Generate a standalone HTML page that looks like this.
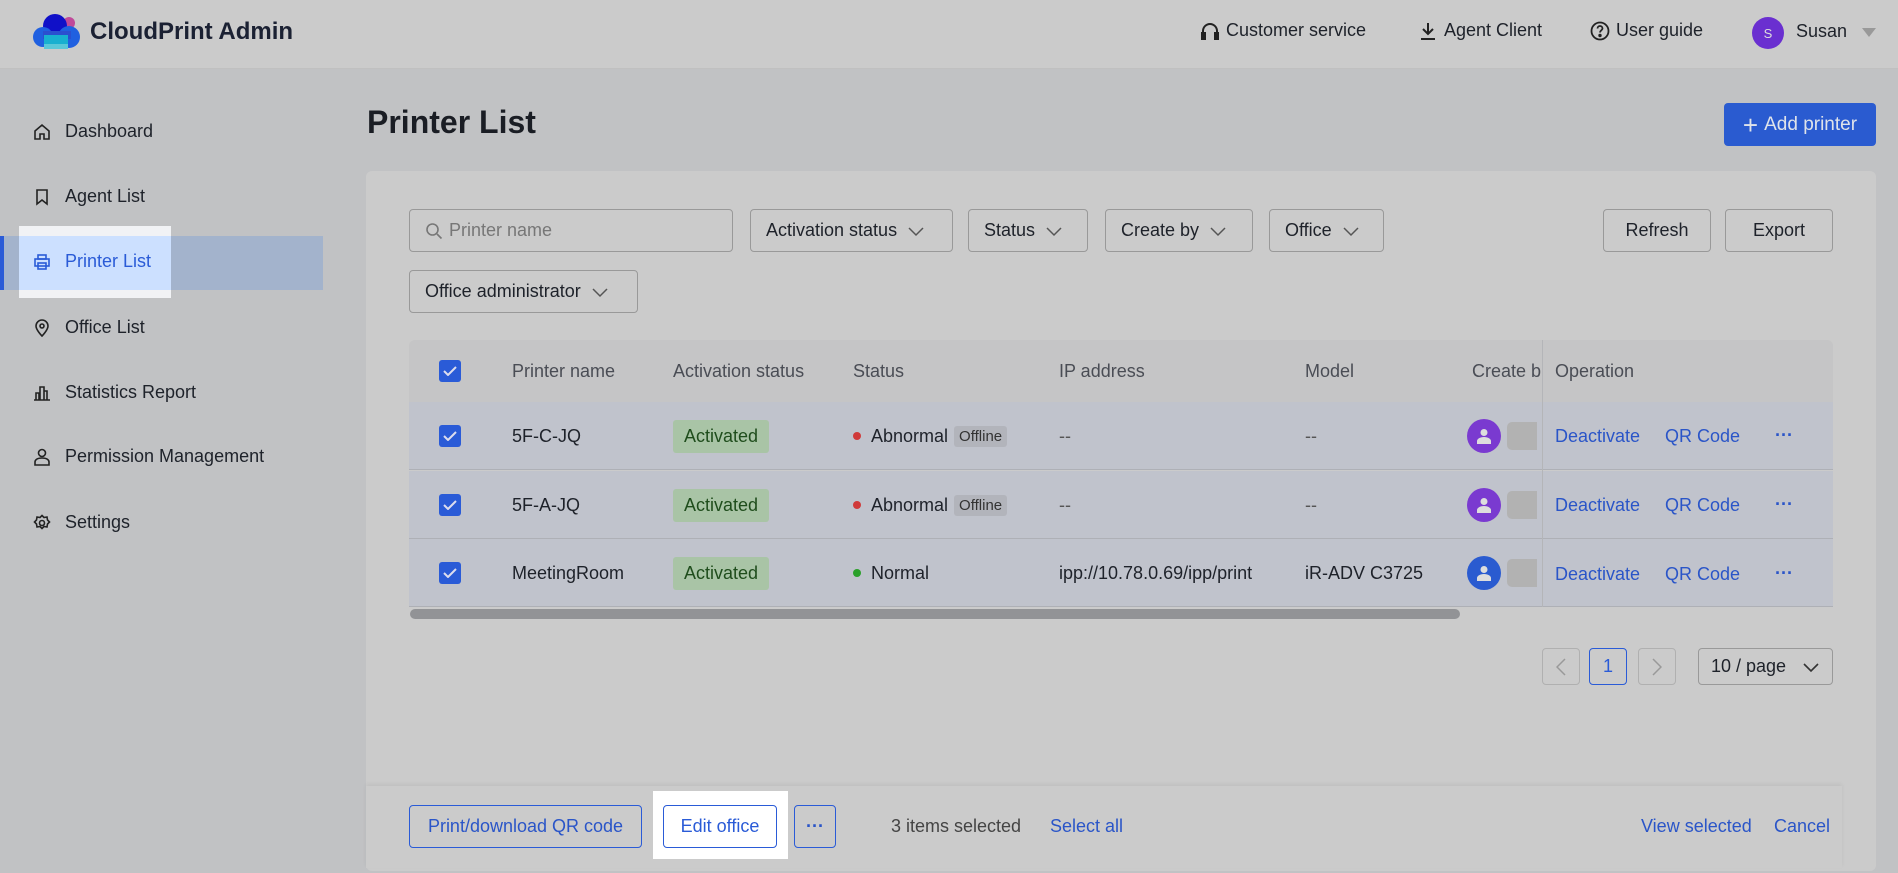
<!DOCTYPE html>
<html><head><meta charset="utf-8"><style>
*{box-sizing:border-box;margin:0;padding:0}
body{width:1898px;height:873px;overflow:hidden;background:#c1c2c4;font-family:"Liberation Sans",Arial,sans-serif;font-size:18px;color:#1e222a;position:relative}
.a{position:absolute}
.hdr{left:0;top:0;width:1898px;height:69px;background:#cbcbcb;border-bottom:1px solid #c0c0c0}
.hi{display:flex;align-items:center;gap:6px;top:20px;font-size:18px;color:#1e222a}
.nav{left:33px;display:flex;align-items:center;gap:14px;color:#1e222a}
.nav svg{width:18px;height:18px}
.card{left:366px;top:171px;width:1510px;height:700px;background:#cbcbcb;border-radius:6px}
.btn{border:1px solid #999;border-radius:4px;display:flex;align-items:center;justify-content:center;background:#cbcbcb;color:#1e222a}
.sel{border:1px solid #999;border-radius:4px;display:flex;align-items:center;padding-left:15px;gap:10px;background:#cbcbcb}
.chev{width:18px;height:12px}
.cb{width:22px;height:22px;background:#2a5bd7;border-radius:3px;display:flex;align-items:center;justify-content:center}
.row{left:409px;width:1424px;height:68px;background:#c0c3cc;border-bottom:1px solid #aeb0b6}
.cell{position:absolute;top:0;height:100%;display:flex;align-items:center}
.tag{background:#a9c4a6;color:#1f4d1c;padding:6px 11px;border-radius:3px}
.off{background:#b2b4bb;color:#333;font-size:15px;padding:2px 5px;border-radius:3px;margin-left:6px}
.dot{width:8px;height:8px;border-radius:50%;margin-right:10px}
.lnk{color:#2a55c8}
.av{width:34px;height:34px;border-radius:50%;display:flex;align-items:center;justify-content:center}
</style></head><body>
<div class="a hdr"></div>
<svg class="a" style="left:33px;top:13px" width="48" height="37" viewBox="0 0 48 37"><circle cx="36" cy="10" r="6" fill="#c04a9a"/><circle cx="22" cy="13" r="12" fill="#1010c8"/><circle cx="10" cy="24" r="10" fill="#2060e0"/><circle cx="36" cy="24" r="11" fill="#2060e0"/><rect x="10" y="18" width="28" height="8" fill="#2a50d0"/><rect x="11" y="22" width="24" height="14" fill="#18b0d0"/><rect x="11" y="31" width="24" height="5" fill="#5ac8d8"/></svg>
<div class="a" style="left:90px;top:18px;font-size:24px;font-weight:bold;color:#1b2133">CloudPrint Admin</div>
<div class="a hi" style="left:1200px"><svg width="20" height="20" viewBox="0 0 20 20" fill="none" stroke="#222" stroke-width="2"><path d="M3 15V10a7 7 0 0114 0v5"/><rect x="2" y="12" width="3" height="6" fill="#222"/><rect x="15" y="12" width="3" height="6" fill="#222"/></svg>Customer service</div>
<div class="a hi" style="left:1418px"><svg width="20" height="20" viewBox="0 0 20 20" fill="none" stroke="#222" stroke-width="2"><path d="M10 2v11M5 8l5 5 5-5M3 18h14"/></svg>Agent Client</div>
<div class="a hi" style="left:1590px"><svg width="20" height="20" viewBox="0 0 20 20" fill="none" stroke="#222" stroke-width="1.8"><circle cx="10" cy="10" r="8.5"/><path d="M7.5 7.5a2.5 2.5 0 115 0c0 1.7-2.5 2-2.5 4"/><circle cx="10" cy="14.5" r="0.8" fill="#222"/></svg>User guide</div>
<div class="a" style="left:1752px;top:17px;width:32px;height:32px;border-radius:50%;background:#6a2fd0;color:#ddd;font-size:13px;display:flex;align-items:center;justify-content:center">S</div>
<div class="a" style="left:1796px;top:21px">Susan</div>
<div class="a" style="left:1862px;top:28px;width:0;height:0;border-left:7px solid transparent;border-right:7px solid transparent;border-top:9px solid #999"></div>

<div class="a" style="left:0;top:236px;width:323px;height:54px;background:#a3b3cc;border-left:4px solid #2a5bd7"></div>
<div class="a" style="left:19px;top:226px;width:152px;height:72px;background:#f1f2f5"></div>
<div class="a" style="left:19px;top:236px;width:152px;height:54px;background:#cce0ff"></div>
<div class="a nav" style="top:121px"><svg viewBox="0 0 18 18" fill="none" stroke="#222" stroke-width="1.6"><path d="M2 8l7-6 7 6v8H11v-5H7v5H2z"/></svg>Dashboard</div>
<div class="a nav" style="top:186px"><svg viewBox="0 0 18 18" fill="none" stroke="#222" stroke-width="1.6"><path d="M4 2h10v14l-5-4-5 4z"/></svg>Agent List</div>
<div class="a nav" style="top:251px;color:#2a5bd7"><svg viewBox="0 0 18 18" fill="none" stroke="#2a5bd7" stroke-width="1.6"><rect x="5" y="2" width="8" height="4"/><rect x="2" y="6" width="14" height="7"/><rect x="5" y="10" width="8" height="6"/></svg>Printer List</div>
<div class="a nav" style="top:317px"><svg viewBox="0 0 18 18" fill="none" stroke="#222" stroke-width="1.6"><path d="M9 17s-6-6-6-10a6 6 0 0112 0c0 4-6 10-6 10z"/><circle cx="9" cy="7" r="2"/></svg>Office List</div>
<div class="a nav" style="top:382px"><svg viewBox="0 0 18 18" fill="none" stroke="#222" stroke-width="1.6"><path d="M1 16h16M3 16V9h3v7M7 16V3h4v13M11 16V7h3v9"/></svg>Statistics Report</div>
<div class="a nav" style="top:446px"><svg viewBox="0 0 18 18" fill="none" stroke="#222" stroke-width="1.6"><circle cx="9" cy="5" r="3.5"/><path d="M2 17v-3c0-2 2-4 7-4s7 2 7 4v3z"/></svg>Permission Management</div>
<div class="a nav" style="top:512px"><svg viewBox="0 0 18 18" fill="none" stroke="#222" stroke-width="1.6"><circle cx="9" cy="9" r="2.5"/><path d="M9 1.5l2 2 3-.5.5 3 2 2-2 2-.5 3-3-.5-2 2-2-2-3 .5-.5-3-2-2 2-2 .5-3 3 .5z"/></svg>Settings</div>

<div class="a" style="left:367px;top:104px;font-size:32px;font-weight:bold;color:#1a1d24">Printer List</div>
<div class="a" style="left:1724px;top:103px;width:152px;height:43px;background:#2a5bd0;border-radius:4px;color:#dfe3ea;display:flex;align-items:center;justify-content:center;gap:6px;font-size:19px"><span style="font-size:26px;font-weight:200;line-height:1">+</span>Add printer</div>

<div class="a card"></div>
<div class="a sel" style="left:409px;top:209px;width:324px;height:43px;color:#777"><svg width="18" height="18" viewBox="0 0 18 18" fill="none" stroke="#777" stroke-width="1.6"><circle cx="7.5" cy="7.5" r="5.5"/><path d="M12 12l4.5 4.5"/></svg><span style="margin-left:-4px">Printer name</span></div>
<div class="a sel" style="left:750px;top:209px;width:203px;height:43px">Activation status <svg class="chev" viewBox="0 0 18 12" fill="none" stroke="#555" stroke-width="1.5"><path d="M2 3l7 7 7-7"/></svg></div>
<div class="a sel" style="left:968px;top:209px;width:120px;height:43px">Status <svg class="chev" viewBox="0 0 18 12" fill="none" stroke="#555" stroke-width="1.5"><path d="M2 3l7 7 7-7"/></svg></div>
<div class="a sel" style="left:1105px;top:209px;width:148px;height:43px">Create by <svg class="chev" viewBox="0 0 18 12" fill="none" stroke="#555" stroke-width="1.5"><path d="M2 3l7 7 7-7"/></svg></div>
<div class="a sel" style="left:1269px;top:209px;width:115px;height:43px">Office <svg class="chev" viewBox="0 0 18 12" fill="none" stroke="#555" stroke-width="1.5"><path d="M2 3l7 7 7-7"/></svg></div>
<div class="a btn" style="left:1603px;top:209px;width:108px;height:43px">Refresh</div>
<div class="a btn" style="left:1725px;top:209px;width:108px;height:43px">Export</div>
<div class="a sel" style="left:409px;top:270px;width:229px;height:43px">Office administrator <svg class="chev" viewBox="0 0 18 12" fill="none" stroke="#555" stroke-width="1.5"><path d="M2 3l7 7 7-7"/></svg></div>

<div class="a" style="left:409px;top:340px;width:1424px;height:62px;background:#c5c5c6;border-radius:6px 6px 0 0;color:#4a4d55">
 <div class="cell" style="left:30px"><div class="cb"><svg width="14" height="10" viewBox="0 0 14 10" fill="none" stroke="#dde" stroke-width="2"><path d="M1 5l4 4 8-8"/></svg></div></div>
 <div class="cell" style="left:103px">Printer name</div><div class="cell" style="left:264px">Activation status</div><div class="cell" style="left:444px">Status</div><div class="cell" style="left:650px">IP address</div><div class="cell" style="left:896px">Model</div><div class="cell" style="left:1063px">Create b</div>
</div>

<div class="a row" style="top:402px"></div>
<div class="a row" style="top:471px"></div>
<div class="a row" style="top:539px"></div>

<div class="a" style="left:409px;top:402px;width:1424px;height:205px">
 <div style="position:absolute;top:0;height:68px;width:100%">
  <div class="cell" style="left:30px"><div class="cb"><svg width="14" height="10" viewBox="0 0 14 10" fill="none" stroke="#dde" stroke-width="2"><path d="M1 5l4 4 8-8"/></svg></div></div>
  <div class="cell" style="left:103px">5F-C-JQ</div><div class="cell" style="left:264px"><span class="tag">Activated</span></div>
  <div class="cell" style="left:444px"><span class="dot" style="background:#d03a3a"></span>Abnormal<span class="off">Offline</span></div>
  <div class="cell" style="left:650px;color:#555">--</div><div class="cell" style="left:896px;color:#555">--</div>
  <div class="cell" style="left:1058px"><div class="av" style="background:#7a3ad0"><svg width="14" height="16" viewBox="0 0 14 16" fill="#ddd"><circle cx="7" cy="4.5" r="3.5"/><path d="M0 16v-3c0-2 3-4 7-4s7 2 7 4v3z"/></svg></div><div style="width:30px;height:28px;background:#b2b2b2;border-radius:5px 0 0 5px;margin-left:6px"></div></div>
 </div>
 <div style="position:absolute;top:69px;height:68px;width:100%">
  <div class="cell" style="left:30px"><div class="cb"><svg width="14" height="10" viewBox="0 0 14 10" fill="none" stroke="#dde" stroke-width="2"><path d="M1 5l4 4 8-8"/></svg></div></div>
  <div class="cell" style="left:103px">5F-A-JQ</div><div class="cell" style="left:264px"><span class="tag">Activated</span></div>
  <div class="cell" style="left:444px"><span class="dot" style="background:#d03a3a"></span>Abnormal<span class="off">Offline</span></div>
  <div class="cell" style="left:650px;color:#555">--</div><div class="cell" style="left:896px;color:#555">--</div>
  <div class="cell" style="left:1058px"><div class="av" style="background:#7a3ad0"><svg width="14" height="16" viewBox="0 0 14 16" fill="#ddd"><circle cx="7" cy="4.5" r="3.5"/><path d="M0 16v-3c0-2 3-4 7-4s7 2 7 4v3z"/></svg></div><div style="width:30px;height:28px;background:#b2b2b2;border-radius:5px 0 0 5px;margin-left:6px"></div></div>
 </div>
 <div style="position:absolute;top:137px;height:68px;width:100%">
  <div class="cell" style="left:30px"><div class="cb"><svg width="14" height="10" viewBox="0 0 14 10" fill="none" stroke="#dde" stroke-width="2"><path d="M1 5l4 4 8-8"/></svg></div></div>
  <div class="cell" style="left:103px">MeetingRoom</div><div class="cell" style="left:264px"><span class="tag">Activated</span></div>
  <div class="cell" style="left:444px"><span class="dot" style="background:#2aa02a"></span>Normal</div>
  <div class="cell" style="left:650px">ipp://10.78.0.69/ipp/print</div><div class="cell" style="left:896px">iR-ADV C3725</div>
  <div class="cell" style="left:1058px"><div class="av" style="background:#2a5bd0"><svg width="14" height="16" viewBox="0 0 14 16" fill="#ddd"><circle cx="7" cy="4.5" r="3.5"/><path d="M0 16v-3c0-2 3-4 7-4s7 2 7 4v3z"/></svg></div><div style="width:30px;height:28px;background:#b2b2b2;border-radius:5px 0 0 5px;margin-left:6px"></div></div>
 </div>
</div>

<div class="a" style="left:1542px;top:340px;width:291px;height:267px;border-left:1px solid #b4b5b8">
 <div style="position:absolute;top:0;left:0;width:100%;height:62px;background:#c5c5c6;border-radius:0 6px 0 0;display:flex;align-items:center;padding-left:12px;color:#4a4d55">Operation</div>
 <div style="position:absolute;top:62px;left:0;width:100%;height:68px;background:#c0c3cc;border-bottom:1px solid #aeb0b6"></div>
 <div style="position:absolute;top:131px;left:0;width:100%;height:68px;background:#c0c3cc;border-bottom:1px solid #aeb0b6"></div>
 <div style="position:absolute;top:199px;left:0;width:100%;height:68px;background:#c0c3cc;border-bottom:1px solid #aeb0b6"></div>
 <div class="lnk" style="position:absolute;top:86px;left:12px">Deactivate</div><div class="lnk" style="position:absolute;top:86px;left:122px">QR Code</div><div class="lnk" style="position:absolute;top:85px;left:232px;font-weight:bold">···</div>
 <div class="lnk" style="position:absolute;top:155px;left:12px">Deactivate</div><div class="lnk" style="position:absolute;top:155px;left:122px">QR Code</div><div class="lnk" style="position:absolute;top:154px;left:232px;font-weight:bold">···</div>
 <div class="lnk" style="position:absolute;top:224px;left:12px">Deactivate</div><div class="lnk" style="position:absolute;top:224px;left:122px">QR Code</div><div class="lnk" style="position:absolute;top:223px;left:232px;font-weight:bold">···</div>
</div>
<div class="a" style="left:410px;top:609px;width:1050px;height:10px;background:#929396;border-radius:5px"></div>

<div class="a btn" style="left:1542px;top:648px;width:38px;height:37px;border-color:#b0b0b0"><svg width="10" height="18" viewBox="0 0 10 18" fill="none" stroke="#999" stroke-width="1.5"><path d="M9 1L1 9l8 8"/></svg></div>
<div class="a btn" style="left:1589px;top:648px;width:38px;height:37px;border-color:#2a5bd7;color:#2a5bd7">1</div>
<div class="a btn" style="left:1638px;top:648px;width:38px;height:37px;border-color:#b0b0b0"><svg width="10" height="18" viewBox="0 0 10 18" fill="none" stroke="#999" stroke-width="1.5"><path d="M1 1l8 8-8 8"/></svg></div>
<div class="a sel" style="left:1698px;top:648px;width:135px;height:37px;padding-left:12px;gap:16px">10 / page <svg class="chev" viewBox="0 0 18 12" fill="none" stroke="#333" stroke-width="1.6"><path d="M2 3l7 7 7-7"/></svg></div>

<div class="a" style="left:366px;top:786px;width:1476px;height:82px;background:#cbcbcb;box-shadow:0 -2px 4px rgba(0,0,0,0.06)"></div>
<div class="a btn" style="left:409px;top:805px;width:233px;height:43px;border-color:#2a5bd7;color:#2a55c8">Print/download QR code</div>
<div class="a" style="left:653px;top:791px;width:135px;height:68px;background:#fff"></div>
<div class="a btn" style="left:663px;top:805px;width:114px;height:43px;border-color:#2a5bd7;color:#2a5bd7;background:#fff">Edit office</div>
<div class="a btn" style="left:794px;top:805px;width:42px;height:43px;border-color:#2a5bd7;color:#2a55c8;font-weight:bold">···</div>
<div class="a" style="left:891px;top:816px;color:#444">3 items selected</div>
<div class="a lnk" style="left:1050px;top:816px">Select all</div>
<div class="a lnk" style="left:1641px;top:816px">View selected</div>
<div class="a lnk" style="left:1774px;top:816px">Cancel</div>
</body></html>
